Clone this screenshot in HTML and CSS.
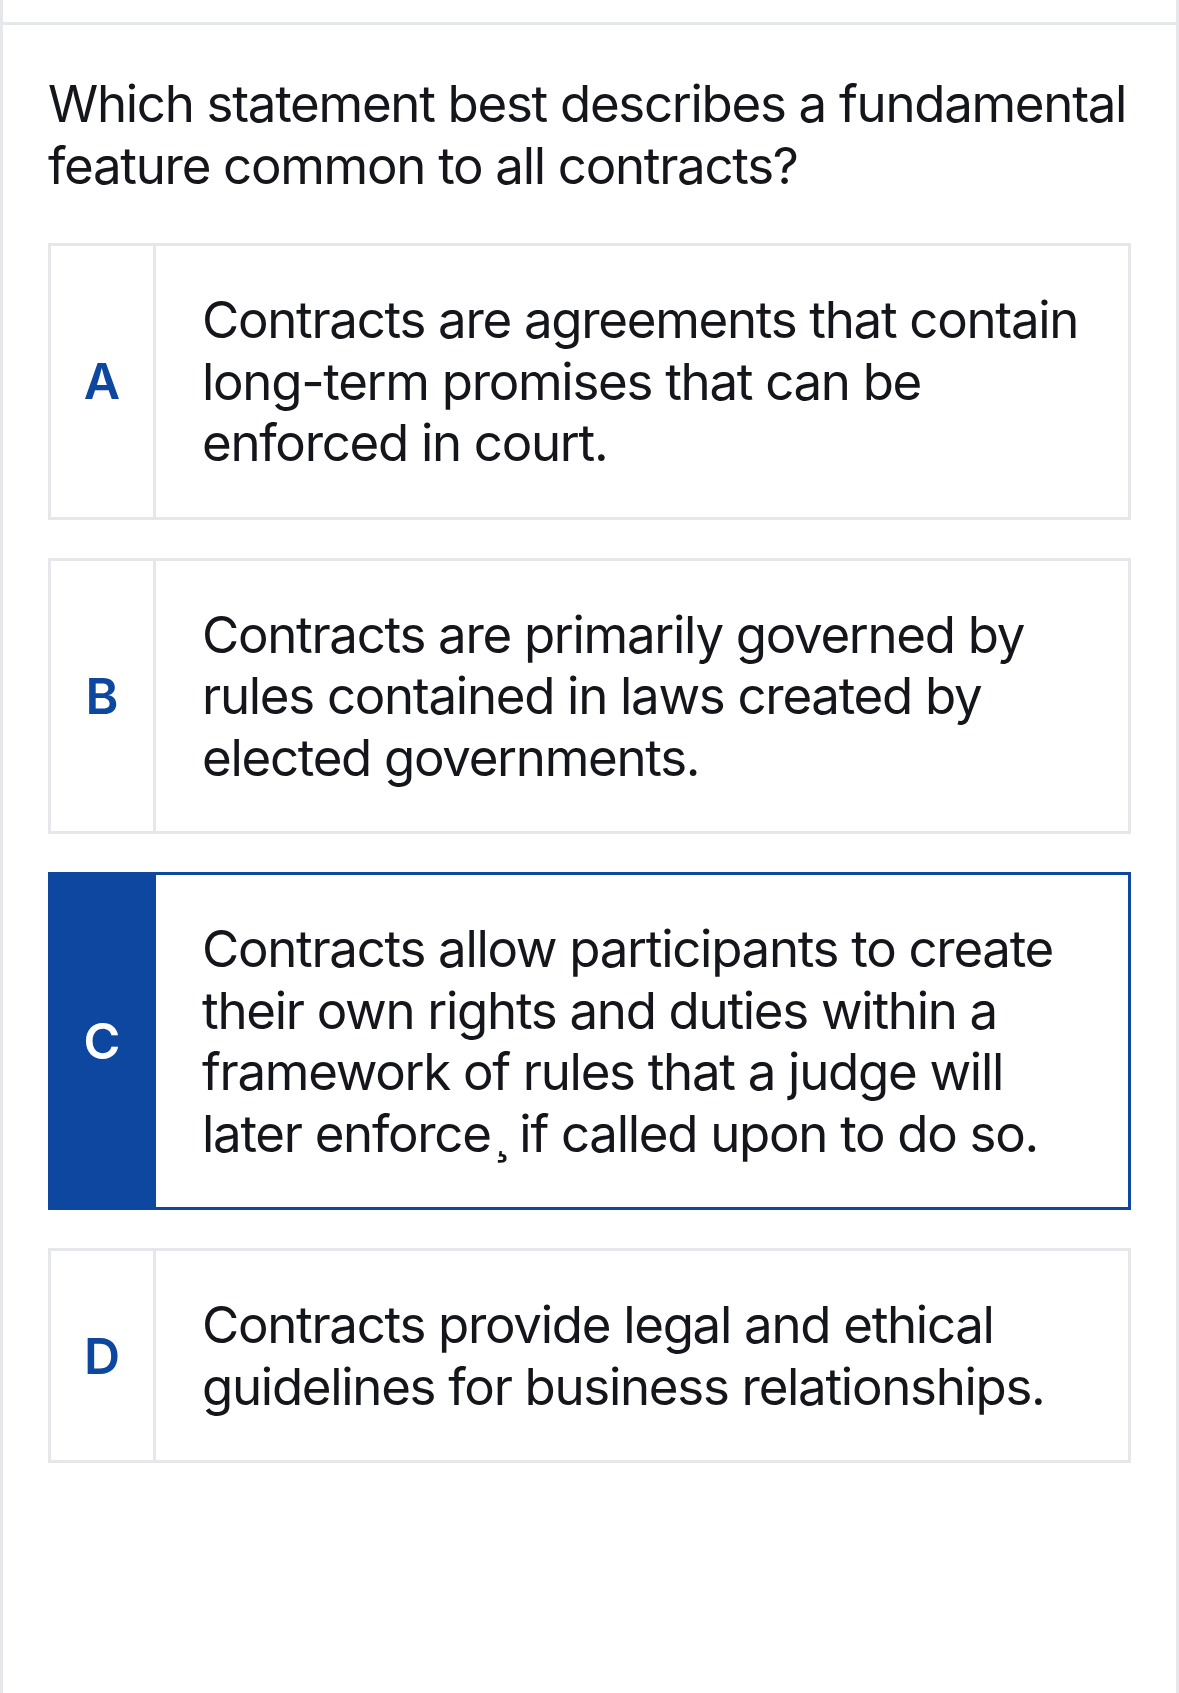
FILE: index.html
```html
<!DOCTYPE html>
<html lang="en">
<head>
<meta charset="utf-8">
<title>Question</title>
<link rel="stylesheet" href="styles.css">
</head>
<body>
<div class="page">
  <div class="prev"></div>
  <main class="main">
    <h1 class="question">Which statement best describes a fundamental feature common to all contracts?</h1>
    <ul class="options">
      <li class="option">
        <div class="letter">A</div>
        <div class="text">Contracts are agreements that contain long-term promises that can be enforced in court.</div>
      </li>
      <li class="option">
        <div class="letter">B</div>
        <div class="text">Contracts are primarily governed by rules contained in laws created by elected governments.</div>
      </li>
      <li class="option selected">
        <div class="letter">C</div>
        <div class="text">Contracts allow participants to create their own rights and duties within a framework of rules that a judge will later enforce&#8202;¸ if called upon to do so.</div>
      </li>
      <li class="option">
        <div class="letter">D</div>
        <div class="text">Contracts provide legal and ethical guidelines for business relationships.</div>
      </li>
    </ul>
  </main>
</div>
</body>
</html>
```

FILE: styles.css
```css
* { box-sizing: border-box; }

html, body {
  margin: 0;
  padding: 0;
  background: #ffffff;
}

body {
  font-family: Inter, "Noto Sans", "Liberation Sans", sans-serif;
  color: #14161b;
}

.page {
  min-height: 1693px;
  display: flex;
  flex-direction: column;
}

.prev {
  height: 25px;
  border-left: 3px solid #e6e7eb;
  border-right: 3px solid #e6e7eb;
  border-bottom: 3px solid #e6e7eb;
}

.main {
  flex: 1;
  border-left: 3px solid #e6e7eb;
  border-right: 3px solid #e6e7eb;
  padding: 48px 45px 0 45px;
}

.question {
  margin: 0;
  font-size: 51px;
  font-weight: 400;
  line-height: 61.5px;
  letter-spacing: -1.3px;
}

.options {
  list-style: none;
  margin: 47px 0 0 0;
  padding: 0;
  display: flex;
  flex-direction: column;
  gap: 38px;
}

.option {
  display: flex;
  border: 3px solid #e6e7eb;
}

.letter {
  width: 105px;
  flex: none;
  border-right: 3px solid #e6e7eb;
  display: flex;
  align-items: center;
  justify-content: center;
  font-size: 50px;
  font-weight: 600;
  color: #0e47a0;
}

.text {
  flex: 1;
  padding: 43px 30px 43px 46px;
  font-size: 51px;
  line-height: 61.5px;
  letter-spacing: -1.3px;
}

.option.selected {
  border-color: #0e47a0;
}

.option.selected .letter {
  background: #0e47a0;
  border-right-color: #0e47a0;
  color: #ffffff;
  margin: -3px 0 -3px -3px;
  width: 108px;
  padding-left: 3px;
}
```
